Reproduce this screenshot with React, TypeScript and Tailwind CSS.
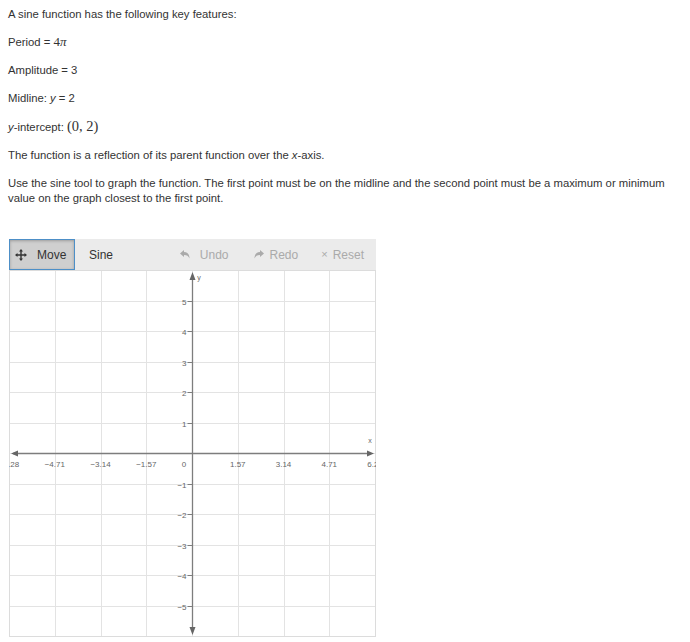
import React from "react";

const sans = { fontFamily: '"Liberation Sans", Arial, sans-serif' };

function MoveIcon() {
  return (
    <svg width="12" height="12" viewBox="0 0 12 12" className="shrink-0">
      <path d="M6 1.5V10.5M1.5 6H10.5" stroke="#333" strokeWidth="1.4" />
      <path d="M6 0L8 2.5H4Z M6 12L8 9.5H4Z M0 6L2.5 4V8Z M12 6L9.5 4V8Z" fill="#333" />
    </svg>
  );
}

function UndoIcon() {
  return (
    <svg width="10" height="9" viewBox="0 0 10 9" className="shrink-0">
      <path d="M0 3.5L4 0V2C7.5 2 9.5 4.5 9.5 8.5C8.5 6 7 5 4 5V7Z" fill="#aaa" />
    </svg>
  );
}

function RedoIcon() {
  return (
    <svg width="10" height="9" viewBox="0 0 10 9" className="shrink-0">
      <path d="M10 3.5L6 0V2C2.5 2 0.5 4.5 0.5 8.5C1.5 6 3 5 6 5V7Z" fill="#aaa" />
    </svg>
  );
}

function Graph() {
  const cx = 183;
  const cy = 183;
  const ux = 45.75;
  const uy = 30.5;
  const vx = [-4, -3, -2, -1, 0, 1, 2, 3, 4].map((k) => Math.round(cx + k * ux) + 0.5);
  const hy = Array.from({ length: 13 }, (_, i) => Math.round(i * uy) + 0.5);
  const xLabels: [number, string][] = [
    [-4, "\u22126.28"],
    [-3, "\u22124.71"],
    [-2, "\u22123.14"],
    [-1, "\u22121.57"],
    [1, "1.57"],
    [2, "3.14"],
    [3, "4.71"],
    [4, "6.28"],
  ];
  const yLabels = [5, 4, 3, 2, 1, -1, -2, -3, -4, -5];
  const ax = cx + 0.5;
  const ay = cy + 0.5;
  return (
    <svg width="367" height="367" viewBox="0 0 367 367" className="block" style={sans}>
      {vx.map((x, i) => (
        <line key={"v" + i} x1={x} y1={0} x2={x} y2={367} stroke="#e3e3e3" strokeWidth="1" />
      ))}
      {hy.map((y, i) => (
        <line key={"h" + i} x1={0} y1={y} x2={367} y2={y} stroke="#e3e3e3" strokeWidth="1" />
      ))}
      <rect x="0.5" y="0.5" width="366" height="366" fill="none" stroke="#dcdcdc" />
      <line x1={4} y1={ay} x2={362} y2={ay} stroke="#7d7d7d" strokeWidth="1.3" />
      <line x1={ax} y1={5} x2={ax} y2={362} stroke="#7d7d7d" strokeWidth="1.3" />
      <path d={`M2 ${ay} L9 ${ay - 3} L9 ${ay + 3} Z`} fill="#666" />
      <path d={`M365 ${ay} L358 ${ay - 3} L358 ${ay + 3} Z`} fill="#666" />
      <path d={`M${ax} 2 L${ax - 3} 10 L${ax + 3} 10 Z`} fill="#666" />
      <path d={`M${ax} 365 L${ax - 3} 357 L${ax + 3} 357 Z`} fill="#666" />
      {yLabels.map((v) => {
        const y = Math.round(cy - v * uy) + 0.5;
        return (
          <g key={"y" + v}>
            <line x1={ax - 5} y1={y} x2={ax} y2={y} stroke="#7d7d7d" strokeWidth="1" />
            <text x={ax - 6} y={y + 3} fontSize="8" fill="#666" textAnchor="end">
              {v < 0 ? "\u2212" + -v : String(v)}
            </text>
          </g>
        );
      })}
      {xLabels.map(([k, s]) => (
        <text key={"x" + k} x={cx + k * ux} y={cy + 14} fontSize="8" fill="#666" textAnchor="middle">
          {s}
        </text>
      ))}
      <text x={175} y={cy + 14} fontSize="8" fill="#666" textAnchor="middle">
        0
      </text>
      <text x={361} y={cy - 10} fontSize="7" fill="#666" textAnchor="middle">
        x
      </text>
      <text x={190} y={10} fontSize="7" fill="#666" textAnchor="middle">
        y
      </text>
    </svg>
  );
}

export default function App() {
  const p = "mb-[13px] leading-[15px]";
  return (
    <div className="bg-white min-h-[642px] pl-[8px] pt-[7px] text-[11.3px] text-[#333]" style={sans}>
      <p className={p}>A sine function has the following key features:</p>
      <p className={p}>
        Period = <span className="text-[13px] leading-none" style={{ fontFamily: '"Liberation Serif", "Times New Roman", serif' }}>4<i>π</i></span>
      </p>
      <p className={p}>Amplitude = 3</p>
      <p className={p}>
        Midline: <i>y</i> = 2
      </p>
      <p className={p}>
        <i>y</i>-intercept:{" "}
        <span className="text-[14.5px] leading-none" style={{ fontFamily: '"Liberation Serif", "Times New Roman", serif' }}>
          (0, 2)
        </span>
      </p>
      <p className={p}>
        The function is a reflection of its parent function over the <i>x</i>-axis.
      </p>
      <p className="leading-[15px] pr-[12px]">
        Use the sine tool to graph the function. The first point must be on the midline and the second point must be a maximum or minimum value on the graph closest to the first point.
      </p>

      <div className="mt-[33px] ml-[1px] w-[367px]">
        <div className="flex h-[31px] items-center bg-[#ebebeb] text-[12px]">
          <div className="flex h-[31px] w-[66px] items-center gap-[10px] border border-[#4d8fc7] bg-[#cfcfcf] pl-[5px] text-[#333] shadow-[inset_0_1px_3px_rgba(0,0,0,0.25)]">
            <MoveIcon />
            <span>Move</span>
          </div>
          <span className="ml-[14px] text-[#333]">Sine</span>
          <div className="ml-auto flex items-center gap-[10px] text-[#aaa]">
            <UndoIcon />
            <span>Undo</span>
          </div>
          <div className="ml-[25px] flex items-center gap-[6px] text-[#aaa]">
            <RedoIcon />
            <span>Redo</span>
          </div>
          <div className="ml-[23px] mr-[12px] flex items-center gap-[5px] text-[#aaa]">
            <span className="text-[11px]">×</span>
            <span>Reset</span>
          </div>
        </div>
        <Graph />
      </div>
    </div>
  );
}
